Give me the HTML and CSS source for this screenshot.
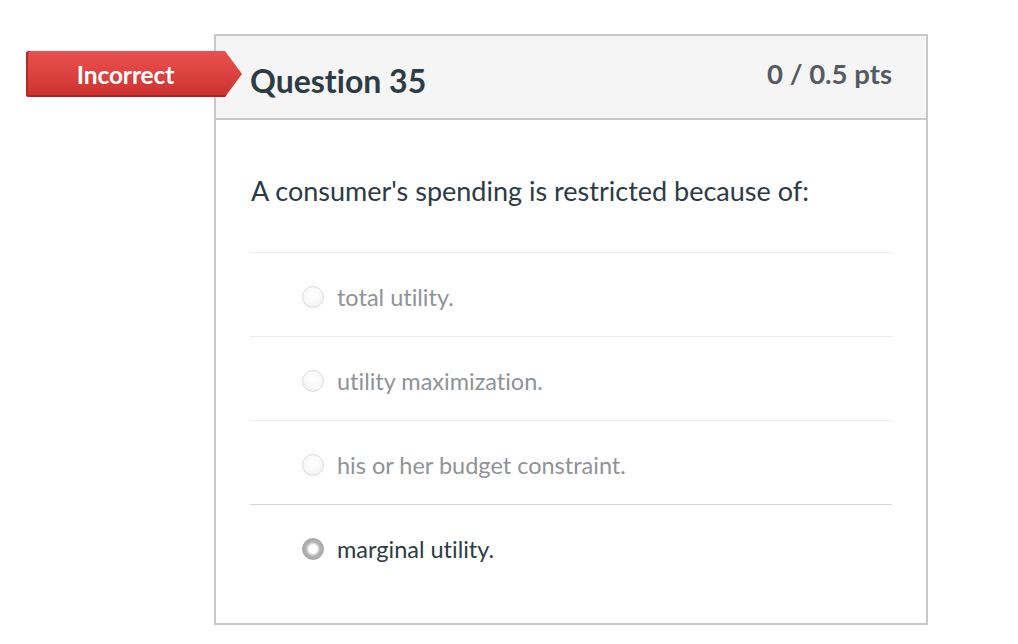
FILE: index.html
```html
<!DOCTYPE html>
<html lang="en">
<head>
<meta charset="utf-8">
<title>Question 35</title>
<link rel="stylesheet" href="styles.css">
</head>
<body>
<div class="page">
  <div class="card">
    <div class="badge">Incorrect</div>
    <div class="card-header">
      <h2 class="title">Question 35</h2>
      <div class="points">0 / 0.5 pts</div>
    </div>
    <div class="card-body">
      <p class="question">A consumer's spending is restricted because of:</p>
      <div class="answers">
        <div class="answer"><span class="radio"></span><span class="label">total utility.</span></div>
        <div class="answer"><span class="radio"></span><span class="label">utility maximization.</span></div>
        <div class="answer"><span class="radio"></span><span class="label">his or her budget constraint.</span></div>
        <div class="answer selected"><span class="radio"></span><span class="label">marginal utility.</span></div>
      </div>
    </div>
  </div>
</div>
</body>
</html>
```

FILE: styles.css
```css
html, body {
  margin: 0;
  padding: 0;
  background: #ffffff;
}

body {
  font-family: Lato, "Open Sans", "Liberation Sans", sans-serif;
  font-variant-ligatures: none;
  font-feature-settings: "liga" 0;
  color: #2d3b45;
}

.page {
  padding: 34px 0 0 214px;
}

.card {
  position: relative;
  width: 714px;
  box-sizing: border-box;
  border: 2px solid #c8c8c8;
  background: #fff;
}

.badge {
  position: absolute;
  left: -190px;
  top: 15px;
  width: 216px;
  height: 46px;
  box-sizing: border-box;
  padding-right: 17px;
  display: flex;
  align-items: center;
  justify-content: center;
  color: #fff;
  font-weight: 700;
  font-size: 24.5px;
  letter-spacing: -0.1px;
  background: linear-gradient(to bottom, #e9514f 0%, #dc4240 50%, #c9302e 100%);
  border-radius: 3px 0 0 3px;
  box-shadow: inset 2px 0 0 #b82826, inset 0 -2px 0 #a82321;
  clip-path: polygon(0 0, 199px 0, 216px 50%, 199px 100%, 0 100%);
}

.card-header {
  height: 84px;
  box-sizing: border-box;
  background: #f5f5f5;
  border-bottom: 2px solid #c8c8c8;
  display: flex;
  justify-content: space-between;
  align-items: flex-start;
  padding: 0 34px 0 34px;
}

.title {
  margin: 0;
  padding-top: 27px;
  font-size: 32px;
  line-height: 36px;
  font-weight: 700;
  color: #2d3b45;
}

.points {
  padding-top: 22px;
  font-size: 27.5px;
  line-height: 32px;
  font-weight: 700;
  color: #555a5f;
}

.card-body {
  padding: 0 34px 35px 34px;
}

.question {
  margin: 0;
  padding: 53px 0 43px 1px;
  font-size: 27px;
  line-height: 36px;
  font-weight: 400;
  color: #2d3b45;
}

.answer {
  height: 84px;
  box-sizing: border-box;
  border-top: 1px solid #ececec;
  display: flex;
  align-items: center;
  padding: 4px 0 0 52px;
  gap: 13px;
}

.answer.selected {
  border-top-color: #d6d6d6;
}

.radio {
  width: 22px;
  height: 22px;
  box-sizing: border-box;
  border-radius: 50%;
  border: 1px solid #dcdcdc;
  background: radial-gradient(circle at 50% 40%, #ffffff 0%, #f7f7f7 60%, #ececec 100%);
  flex: none;
}

.label {
  font-size: 23.5px;
  line-height: 30px;
  color: #8f9398;
}

.selected .radio {
  border: 1px solid #a8a8a8;
  background: radial-gradient(circle at 50% 50%, #ffffff 0, #ffffff 4px, #e8e8e8 5px, #b4b4b4 7px, #a5a5a5 11px);
}

.selected .label {
  color: #2d3b45;
}
```
